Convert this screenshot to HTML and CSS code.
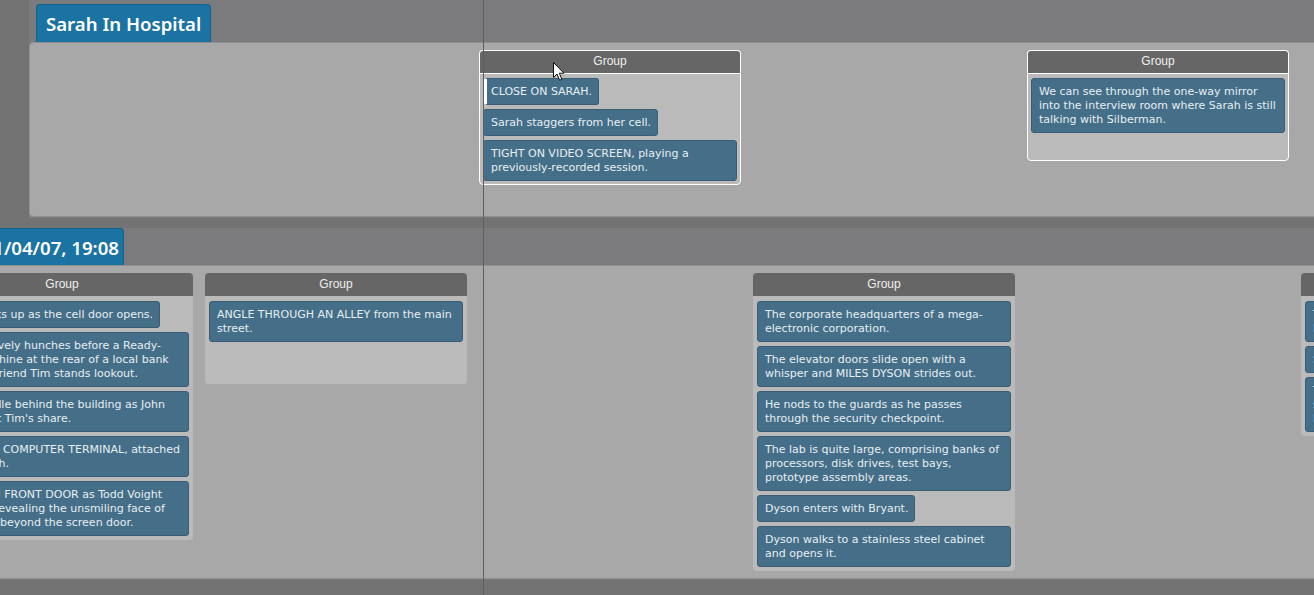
FILE: index.html
```html
<!DOCTYPE html>
<html lang="en">
<head>
<meta charset="utf-8">
<title>Scene timeline</title>
<link rel="stylesheet" href="styles.css">
</head>
<body>
<div class="timeline">
  <section class="scene scene--hospital">
    <div class="scene-tabs"><div class="scene-tab">Sarah In Hospital</div></div>
    <div class="scene-panel">
      <div class="group group--selected slot-2">
        <div class="group-head">Group</div>
        <div class="group-body">
          <div class="card card--current">CLOSE ON SARAH.</div>
          <div class="card">Sarah staggers from her cell.</div>
          <div class="card">TIGHT ON VIDEO SCREEN, playing a previously-recorded session.</div>
        </div>
      </div>
      <div class="group group--selected slot-4">
        <div class="group-head">Group</div>
        <div class="group-body">
          <div class="card">We can see through the one-way mirror into the interview room where Sarah is still talking with Silberman.</div>
        </div>
      </div>
    </div>
  </section>

  <section class="scene scene--dated">
    <div class="scene-tabs"><div class="scene-tab">2021/04/07, 19:08</div></div>
    <div class="scene-panel">
      <div class="group slot-1">
        <div class="group-head">Group</div>
        <div class="group-body">
          <div class="card">Sarah looks up as the cell door opens.</div>
          <div class="card">JOHN furtively hunches before a Ready-Teller machine at the rear of a local bank while his friend Tim stands lookout.</div>
          <div class="card">They huddle behind the building as John counts out Tim's share.</div>
          <div class="card">CLOSE ON COMPUTER TERMINAL, attached on a switch.</div>
          <div class="card">ANGLE ON FRONT DOOR as Todd Voight opens it, revealing the unsmiling face of the guard beyond the screen door.</div>
        </div>
      </div>
      <div class="group slot-2">
        <div class="group-head">Group</div>
        <div class="group-body">
          <div class="card">ANGLE THROUGH AN ALLEY from the main street.</div>
        </div>
      </div>
      <div class="group slot-4">
        <div class="group-head">Group</div>
        <div class="group-body">
          <div class="card">The corporate headquarters of a mega-electronic corporation.</div>
          <div class="card">The elevator doors slide open with a whisper and MILES DYSON strides out.</div>
          <div class="card">He nods to the guards as he passes through the security checkpoint.</div>
          <div class="card">The lab is quite large, comprising banks of processors, disk drives, test bays, prototype assembly areas.</div>
          <div class="card">Dyson enters with Bryant.</div>
          <div class="card">Dyson walks to a stainless steel cabinet and opens it.</div>
        </div>
      </div>
      <div class="group slot-6">
        <div class="group-head">Group</div>
        <div class="group-body">
          <div class="card">The T-1000 walks down the corridor of the hospital wing.</div>
          <div class="card">Sarah waits in the dark.</div>
          <div class="card">The orderly unlocks the door of the security ward and steps aside, holding the keys in one hand.</div>
        </div>
      </div>
    </div>
  </section>
</div>

<div class="playhead"></div>
<svg class="cursor" width="13" height="20" viewBox="0 0 13 20" aria-hidden="true">
  <path d="M0.5 0.5 L0.5 15.5 L4 12 L6.6 18.2 L8.8 17.3 L6.3 11.2 L11 11.2 Z" fill="#fff" stroke="#111" stroke-width="1" stroke-linejoin="round"/>
</svg>
</body>
</html>
```

FILE: styles.css
```css
html {
  overflow: hidden;
}

body {
  margin: 0;
  background: #727272;
  overflow: hidden;
  font-family: "DejaVu Sans", Verdana, sans-serif;
  font-size: 11px;
}

.timeline {
  display: flex;
  flex-direction: column;
  align-items: flex-start;
}

.scene {
  width: 1900px;
  background: #7b7a7c;
  padding: 4px 0 1px;
}

.scene--hospital {
  margin-left: 29px;
}

.scene--dated {
  margin-left: -100px;
  margin-top: 10px;
  padding-top: 0;
}

.scene-tabs {
  display: flex;
  padding-left: 7px;
}

.scene--dated .scene-tabs {
  padding-left: 0;
  width: 224px;
  justify-content: flex-end;
}

.scene-tab {
  height: 38px;
  box-sizing: border-box;
  padding: 0 9px;
  background: #1a73a2;
  border: 1px solid #12628c;
  border-bottom: 0;
  border-radius: 4px 4px 0 0;
  color: #ffffff;
  font-family: "Noto Sans", "Open Sans", sans-serif;
  font-weight: 600;
  font-size: 18.6px;
  line-height: 38px;
  white-space: nowrap;
}

.scene--dated .scene-tab {
  height: 37px;
  line-height: 37px;
  padding-right: 4px;
}

.scene-panel {
  display: grid;
  grid-template-columns: repeat(6, 262px);
  column-gap: 12px;
  align-items: start;
  background: #a8a8a9;
  border: 1px solid #8f8f90;
  border-radius: 4px;
  padding: 7px 0;
}

.scene--hospital .scene-panel {
  padding-left: 175px;
  height: 175px;
  box-sizing: border-box;
}

.scene--dated .scene-panel {
  padding-left: 30px;
}

.slot-1 { grid-column: 1; }
.slot-2 { grid-column: 2; }
.slot-4 { grid-column: 4; }
.slot-6 { grid-column: 6; }

.group {
  display: flex;
  flex-direction: column;
}

.group-head {
  height: 23px;
  box-sizing: border-box;
  background: #666666;
  color: #eeeeee;
  font-family: "Liberation Sans", Arial, sans-serif;
  font-size: 12px;
  line-height: 23px;
  text-align: center;
  border-radius: 4px 4px 0 0;
}

.group--selected .group-head {
  border: 1px solid #ffffff;
  border-bottom: 0;
  line-height: 21px;
}

.group-body {
  display: flex;
  flex-direction: column;
  align-items: flex-start;
  gap: 4px;
  min-height: 88px;
  box-sizing: border-box;
  background: #bababa;
  border: 1px solid transparent;
  border-radius: 0 0 4px 4px;
  padding: 4px 3px 3px;
}

.group--selected .group-body {
  border-color: #ffffff;
}

.card {
  max-width: 100%;
  box-sizing: border-box;
  background: #456e88;
  border: 1px solid #3a5d73;
  border-radius: 3px;
  padding: 6px 6px 5px 7px;
  color: #e6eef3;
  line-height: 14px;
}

.card--current {
  margin-left: 1px;
  border-left: 3px solid #ffffff;
  padding-left: 4px;
}

.playhead {
  position: fixed;
  left: 483px;
  top: 0;
  width: 1px;
  height: 100%;
  background: #5e5e5f;
}

.cursor {
  position: fixed;
  left: 553px;
  top: 62px;
}
```
